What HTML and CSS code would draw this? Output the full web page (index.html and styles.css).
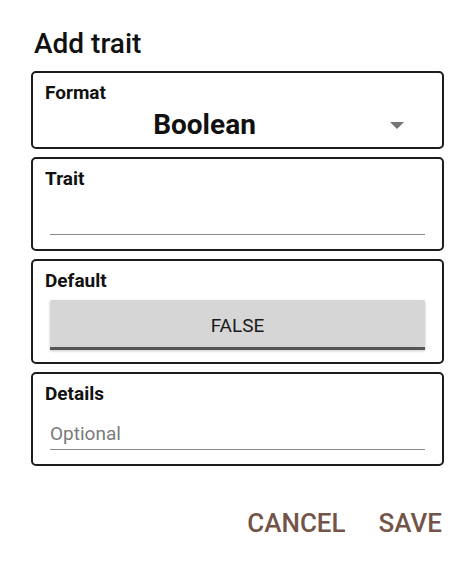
FILE: index.html
```html
<!DOCTYPE html>
<html lang="en">
<head>
<meta charset="utf-8">
<title>Add trait</title>
<link rel="stylesheet" href="styles.css">
</head>
<body>
<div class="dialog">
  <h1 class="title">Add trait</h1>
  <div class="cards">
    <section class="card">
      <div class="label">Format</div>
      <div class="select">
        <span class="select-value">Boolean</span>
        <span class="select-arrow"><span class="tri"></span></span>
      </div>
    </section>
    <section class="card">
      <div class="label">Trait</div>
      <input class="field" type="text" value="">
    </section>
    <section class="card card-default">
      <div class="label">Default</div>
      <button class="toggle" type="button">FALSE</button>
    </section>
    <section class="card">
      <div class="label">Details</div>
      <input class="field" type="text" placeholder="Optional">
    </section>
  </div>
  <div class="actions">
    <button class="action" type="button">CANCEL</button>
    <button class="action" type="button">SAVE</button>
  </div>
</div>
</body>
</html>
```
FILE: styles.css
```css
* { box-sizing: border-box; }
html, body {
  margin: 0;
  padding: 0;
  background: #ffffff;
}
body {
  font-family: Roboto, "Liberation Sans", sans-serif;
  color: #111111;
  width: 474px;
  height: 562px;
  overflow: hidden;
}
.dialog {
  padding: 28px 30px 0 31px;
}
.title {
  margin: 0 0 11px 3px;
  font-size: 28px;
  line-height: 32px;
  font-weight: 500;
  color: #111111;
}
.cards {
  display: flex;
  flex-direction: column;
  gap: 7.5px;
}
.card {
  border: 2px solid #1c1c1c;
  border-radius: 5px;
  padding: 9px 12px 14.5px 12px;
}
.label {
  font-size: 19px;
  line-height: 22px;
  font-weight: 700;
  color: #111111;
}
.card:first-child {
  padding-bottom: 6px;
}
.select {
  display: flex;
  align-items: center;
  margin: 5px 5px 0 5px;
  height: 32px;
}
.select-value {
  flex: 1;
  text-align: center;
  font-size: 28px;
  line-height: 32px;
  font-weight: 700;
  color: #111111;
}
.select-arrow {
  width: 66px;
  display: flex;
  justify-content: flex-end;
  padding-right: 21px;
}
.tri {
  width: 0;
  height: 0;
  border-left: 7px solid transparent;
  border-right: 7px solid transparent;
  border-top: 7px solid #757575;
}
.field {
  display: block;
  box-sizing: content-box;
  width: calc(100% - 10px);
  margin: 0 5px;
  padding: 17px 0 3px 0;
  height: 24px;
  border: none;
  border-bottom: 1px solid #8a8a8a;
  outline: none;
  background: transparent;
  font-family: Roboto, "Liberation Sans", sans-serif;
  font-size: 19px;
  line-height: 24px;
  color: #111111;
}
.field::placeholder {
  color: #7a7a7a;
}
.card-default {
  padding-bottom: 12px;
}
.toggle {
  display: block;
  width: calc(100% - 10px);
  margin: 8.5px 5px 0 5px;
  height: 50px;
  padding: 4px 0 0 0;
  border: none;
  border-bottom: 3px solid #555555;
  border-radius: 2px 2px 0 0;
  background: #d6d6d6;
  box-shadow: 0 1px 3px rgba(0, 0, 0, 0.22);
  font-family: Roboto, "Liberation Sans", sans-serif;
  font-size: 19px;
  line-height: 43px;
  color: #1a1a1a;
  text-align: center;
}
.actions {
  display: flex;
  justify-content: flex-end;
  gap: 33px;
  margin-top: 42px;
  padding-right: 2px;
}
.action {
  border: none;
  background: transparent;
  padding: 0;
  font-family: Roboto, "Liberation Sans", sans-serif;
  font-size: 26px;
  line-height: 30px;
  font-weight: 500;
  color: #735449;
}
```
